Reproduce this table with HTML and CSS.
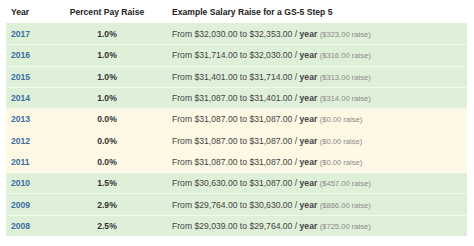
FILE: index.html
```html
<!DOCTYPE html>
<html>
<head>
<meta charset="utf-8">
<link rel="stylesheet" href="styles.css">
</head>
<body>
<table class="raises">
  <thead>
    <tr><th class="c-year">Year</th><th class="c-pct">Percent Pay Raise</th><th class="c-ex">Example Salary Raise for a GS-5 Step 5</th></tr>
  </thead>
  <tbody>
    <tr class="up"><td class="year">2017</td><td class="pct">1.0%</td><td class="ex">From $32,030.00 to $32,353.00 / <b>year</b> <span class="r">($323.00 raise)</span></td></tr>
    <tr class="up"><td class="year">2016</td><td class="pct">1.0%</td><td class="ex">From $31,714.00 to $32,030.00 / <b>year</b> <span class="r">($316.00 raise)</span></td></tr>
    <tr class="up"><td class="year">2015</td><td class="pct">1.0%</td><td class="ex">From $31,401.00 to $31,714.00 / <b>year</b> <span class="r">($313.00 raise)</span></td></tr>
    <tr class="up"><td class="year">2014</td><td class="pct">1.0%</td><td class="ex">From $31,087.00 to $31,401.00 / <b>year</b> <span class="r">($314.00 raise)</span></td></tr>
    <tr class="flat"><td class="year">2013</td><td class="pct">0.0%</td><td class="ex">From $31,087.00 to $31,087.00 / <b>year</b> <span class="r">($0.00 raise)</span></td></tr>
    <tr class="flat"><td class="year">2012</td><td class="pct">0.0%</td><td class="ex">From $31,087.00 to $31,087.00 / <b>year</b> <span class="r">($0.00 raise)</span></td></tr>
    <tr class="flat"><td class="year">2011</td><td class="pct">0.0%</td><td class="ex">From $31,087.00 to $31,087.00 / <b>year</b> <span class="r">($0.00 raise)</span></td></tr>
    <tr class="up"><td class="year">2010</td><td class="pct">1.5%</td><td class="ex">From $30,630.00 to $31,087.00 / <b>year</b> <span class="r">($457.00 raise)</span></td></tr>
    <tr class="up"><td class="year">2009</td><td class="pct">2.9%</td><td class="ex">From $29,764.00 to $30,630.00 / <b>year</b> <span class="r">($866.00 raise)</span></td></tr>
    <tr class="up"><td class="year">2008</td><td class="pct">2.5%</td><td class="ex">From $29,039.00 to $29,764.00 / <b>year</b> <span class="r">($725.00 raise)</span></td></tr>
  </tbody>
</table>
</body>
</html>
```
FILE: styles.css
```css
html, body { margin: 0; padding: 0; background: #fff; }
body { padding: 0 7px 0 6px; font-family: "Liberation Sans", Arial, sans-serif; }
.raises {
  width: 461px;
  border-collapse: collapse;
  table-layout: fixed;
  font-size: 8.6px;
  color: #444;
}
.raises th {
  height: 23px;
  padding: 0 5px;
  font-weight: bold;
  color: #222;
  vertical-align: middle;
  text-align: left;
}
.raises th.c-year { width: 31px; }
.raises th.c-pct { width: 110px; text-align: center; }
.raises td {
  height: 20.3px;
  padding: 0 5px;
  vertical-align: middle;
  border-top: 1px solid rgba(255,255,255,0.55);
}
.raises tbody tr:first-child td { border-top: none; height: 21.3px; }
.up td { background: #dff0d8; }
.flat td { background: #fcf8e3; }
.year { font-weight: bold; color: #3b6ea5; }
.pct { text-align: center; font-weight: bold; color: #333; }
.ex b { font-weight: bold; color: #444; }
.r { font-size: 7.6px; color: #8a8a8a; }
```
